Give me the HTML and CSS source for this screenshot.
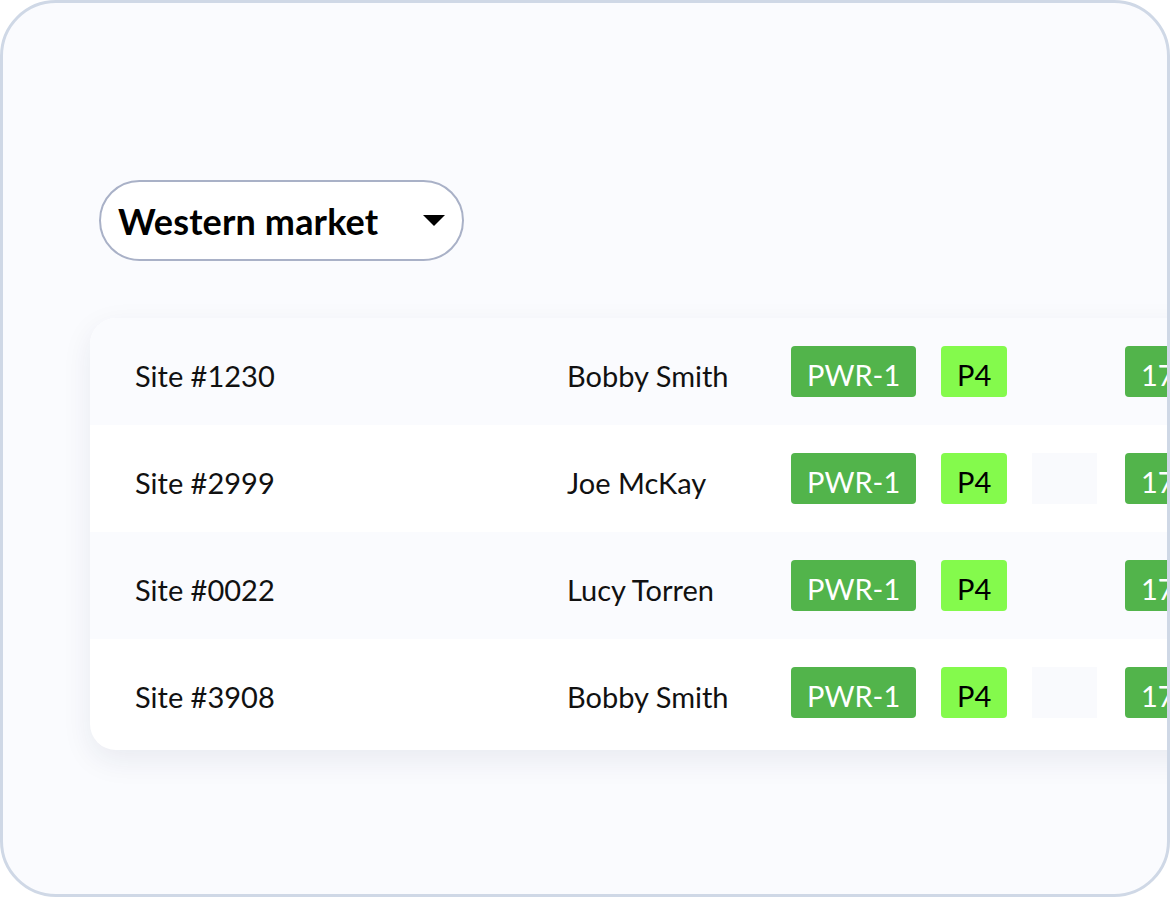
FILE: index.html
```html
<!DOCTYPE html>
<html lang="en">
<head>
  <meta charset="UTF-8">
  <meta name="viewport" content="width=device-width, initial-scale=1.0">
  <title>Sites</title>
  <link rel="stylesheet" href="styles.css">
</head>
<body>
  <div class="frame">
    <div class="dropdown">
      <span class="dropdown-label">Western market</span>
      <svg class="caret" width="22" height="12" viewBox="0 0 22 12"><path d="M0 0 H22 L11 11 Z" fill="#000"/></svg>
    </div>

    <div class="table">
      <div class="row tinted">
        <div class="cell site">Site #1230</div>
        <div class="cell name">Bobby Smith</div>
        <div class="cell"><span class="badge dark">PWR-1</span></div>
        <div class="cell"><span class="badge light">P4</span></div>
        <div class="cell"></div>
        <div class="cell"><span class="badge dark">17</span></div>
      </div>
      <div class="row">
        <div class="cell site">Site #2999</div>
        <div class="cell name">Joe McKay</div>
        <div class="cell"><span class="badge dark">PWR-1</span></div>
        <div class="cell"><span class="badge light">P4</span></div>
        <div class="cell"><span class="placeholder"></span></div>
        <div class="cell"><span class="badge dark">17</span></div>
      </div>
      <div class="row tinted">
        <div class="cell site">Site #0022</div>
        <div class="cell name">Lucy Torren</div>
        <div class="cell"><span class="badge dark">PWR-1</span></div>
        <div class="cell"><span class="badge light">P4</span></div>
        <div class="cell"></div>
        <div class="cell"><span class="badge dark">17</span></div>
      </div>
      <div class="row">
        <div class="cell site">Site #3908</div>
        <div class="cell name">Bobby Smith</div>
        <div class="cell"><span class="badge dark">PWR-1</span></div>
        <div class="cell"><span class="badge light">P4</span></div>
        <div class="cell"><span class="placeholder"></span></div>
        <div class="cell"><span class="badge dark">17</span></div>
      </div>
    </div>
  </div>
</body>
</html>
```

FILE: styles.css
```css
* {
  margin: 0;
  padding: 0;
  box-sizing: border-box;
  font-family: Lato, "Noto Sans", Arial, sans-serif;
}

body {
  background-color: #fff;
  width: 1170px;
  height: 897px;
  overflow: hidden;
}

.frame {
  width: 1170px;
  height: 897px;
  border: 3px solid #cfd8e6;
  border-radius: 56px;
  background-color: #fafbfe;
  padding: 177px 0 0 87px;
  overflow: hidden;
}

.dropdown {
  margin-left: 9px;
  width: 365px;
  height: 81px;
  border: 2px solid #a9b1c7;
  border-radius: 41px;
  background-color: #fff;
  display: flex;
  align-items: center;
  justify-content: space-between;
  padding: 0 17px 0 17px;
}

.dropdown-label {
  font-size: 36px;
  font-weight: 700;
  color: #000;
  letter-spacing: 0.15px;
}

.caret {
  display: block;
}

.table {
  margin-top: 57px;
  width: 1200px;
  background-color: #fff;
  border-radius: 26px;
  box-shadow: 0 10px 30px rgba(30, 40, 80, 0.08);
  padding-bottom: 4px;
  overflow: hidden;
}

.row {
  display: grid;
  grid-template-columns: 432px 224px 150px 91px 93px 1fr;
  align-items: center;
  height: 107px;
  padding-left: 45px;
}

.row.tinted {
  background-color: #fafbfe;
}

.cell {
  display: flex;
  align-items: center;
  font-size: 29px;
  color: #111;
}

.site,
.name {
  padding-top: 7px;
}

.badge {
  display: flex;
  align-items: center;
  height: 51px;
  padding: 5px 16px 0 16px;
  border-radius: 4px;
  font-size: 29px;
  white-space: nowrap;
}

.dark {
  background-color: #52b44b;
  color: #fff;
}

.light {
  background-color: #84fa4c;
  color: #000;
}

.placeholder {
  display: block;
  width: 65px;
  height: 51px;
  background-color: #f9fafd;
}
```
